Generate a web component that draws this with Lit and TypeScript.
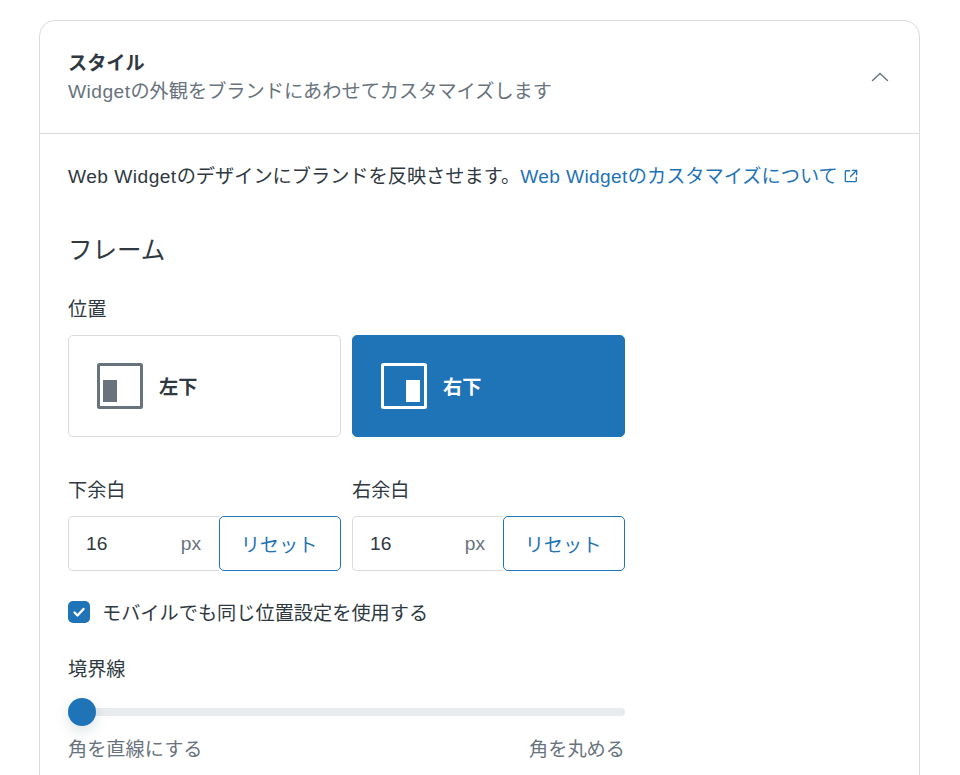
import { LitElement, html, css } from "lit";
import { customElement } from "lit/decorators.js";

@customElement("app-root")
export class AppRoot extends LitElement {
  static styles = css`
    :host {
      display: block;
      height: 775px;
      overflow: hidden;
      background: #fff;
      font-family: "Liberation Sans", "Noto Sans CJK JP", sans-serif;
      font-size: 19.2px;
      color: #2f3941;
      box-sizing: border-box;
      padding: 20px 40px 0 39px;
    }
    * { box-sizing: border-box; }
    .lat { letter-spacing: 0.45px; }
    .card {
      border: 1.33px solid #d8dcde;
      border-radius: 16px;
      background: #fff;
      height: 900px;
    }
    .head {
      height: 113px;
      padding: 29px 28px 0 28px;
      border-bottom: 1.33px solid #d8dcde;
      display: flex;
      justify-content: space-between;
    }
    .title { font-weight: 700; line-height: 28px; height: 28px; }
    .sub { color: #68737d; line-height: 28px; }
    .chev { margin: 16px 0 0 0; width: 22px; height: 22px; display: block; }
    .body { padding: 0 28px; }
    .intro { display: flex; align-items: center; height: 84px; padding-bottom: 2px; white-space: nowrap; }
    .intro a { color: #1f73b7; text-decoration: none; }
    .intro a .lat { letter-spacing: 0.35px; }
    .ext { width: 14px; height: 14px; margin-left: 6px; display: block; margin-top: 2px; }
    h2 { margin: 17px 0 0; font-size: 24.5px; font-weight: 400; line-height: 32px; height: 32px; }
    .form { width: 557px; }
    .label { line-height: 26px; height: 26px; }
    .pos-label { margin-top: 30px; margin-bottom: 12px; }
    .cards { display: grid; grid-template-columns: 273px 273px; gap: 11px; }
    .opt {
      height: 102px;
      border: 1.33px solid #d8dcde;
      border-radius: 5px;
      display: flex;
      align-items: center;
      padding-left: 28px;
      gap: 16px;
      font-weight: 700;
    }
    .opt.on { background: #1f73b7; border-color: #1f73b7; color: #fff; }
    .opt svg { width: 46px; height: 46px; display: block; }
    .fields { display: grid; grid-template-columns: 273px 273px; gap: 11px; margin-top: 41px; }
    .fields .label { margin-bottom: 12px; }
    .group { display: flex; height: 55px; }
    .input {
      width: 151px;
      border: 1.33px solid #d8dcde;
      border-right: none;
      border-radius: 5px 0 0 5px;
      display: flex;
      align-items: center;
      justify-content: space-between;
      padding: 0 18px 0 17px;
    }
    .px { color: #68737d; }
    .reset {
      width: 122px;
      border: 1.33px solid #1f73b7;
      border-radius: 5px;
      color: #1f73b7;
      display: flex;
      align-items: center;
      justify-content: center;
      padding-right: 2px;
    }
    .check { display: flex; align-items: center; margin-top: 27px; height: 28px; gap: 12px; }
    .box {
      width: 22px; height: 22px; border-radius: 5px; background: #1f73b7;
      display: flex; align-items: center; justify-content: center;
    }
    .box svg { width: 16px; height: 16px; display: block; }
    .bord { margin-top: 31px; }
    .slider { position: relative; height: 28px; margin-top: 15px; display: flex; align-items: center; }
    .track { width: 100%; height: 8px; background: #e9ebed; border-radius: 4px; }
    .thumb {
      position: absolute; left: 0; top: 0; width: 28px; height: 28px; border-radius: 50%;
      background: #1f73b7; box-shadow: 0 5px 14px rgba(4, 68, 77, 0.15);
    }
    .ends { display: flex; justify-content: space-between; color: #68737d; line-height: 28px; margin-top: 10px; }
  `;

  private posIcon(right: boolean, stroke: string) {
    return html`<svg viewBox="0 0 46 46">
      <rect x="1.5" y="1.5" width="43" height="43" rx="1" fill="none" stroke="${stroke}" stroke-width="3"></rect>
      <rect x="${right ? 25 : 6}" y="17" width="14" height="22" fill="${stroke}"></rect>
    </svg>`;
  }

  render() {
    return html`
      <section class="card">
        <header class="head">
          <div>
            <div class="title">スタイル</div>
            <div class="sub"><span class="lat">Widget</span>の外観をブランドにあわせてカスタマイズします</div>
          </div>
          <svg class="chev" viewBox="0 0 22 22" fill="none" stroke="#68737d" stroke-width="1.4" stroke-linecap="round">
            <path d="M3.5 14.5 L11 7.5 L18.5 14.5"></path>
          </svg>
        </header>
        <div class="body">
          <div class="intro">
            <span><span class="lat">Web Widget</span>のデザインにブランドを反映させます。</span>
            <a href="#"><span class="lat">Web Widget</span>のカスタマイズについて</a>
            <svg class="ext" viewBox="0 0 16 16" fill="none" stroke="#1f73b7" stroke-width="1.5" stroke-linecap="round" stroke-linejoin="round">
              <path d="M6.5 2 H2.5 a1 1 0 0 0 -1 1 V13.5 a1 1 0 0 0 1 1 H13 a1 1 0 0 0 1 -1 V9.5"></path>
              <path d="M9.5 1.5 H14.5 V6.5 M14.5 1.5 L7.5 8.5"></path>
            </svg>
          </div>
          <h2>フレーム</h2>
          <div class="form">
            <div class="label pos-label">位置</div>
            <div class="cards">
              <div class="opt">${this.posIcon(false, "#68737d")}<span>左下</span></div>
              <div class="opt on">${this.posIcon(true, "#ffffff")}<span>右下</span></div>
            </div>
            <div class="fields">
              ${["下余白", "右余白"].map(
                (l) => html`<div>
                  <div class="label">${l}</div>
                  <div class="group">
                    <div class="input"><span>16</span><span class="px">px</span></div>
                    <div class="reset">リセット</div>
                  </div>
                </div>`
              )}
            </div>
            <div class="check">
              <span class="box">
                <svg viewBox="0 0 16 16" fill="none" stroke="#fff" stroke-width="2.4" stroke-linecap="round" stroke-linejoin="round">
                  <path d="M3.5 8.5 L6.5 11.5 L12.5 5"></path>
                </svg>
              </span>
              <span>モバイルでも同じ位置設定を使用する</span>
            </div>
            <div class="label bord">境界線</div>
            <div class="slider"><div class="track"></div><div class="thumb"></div></div>
            <div class="ends"><span>角を直線にする</span><span>角を丸める</span></div>
          </div>
        </div>
      </section>
    `;
  }
}
